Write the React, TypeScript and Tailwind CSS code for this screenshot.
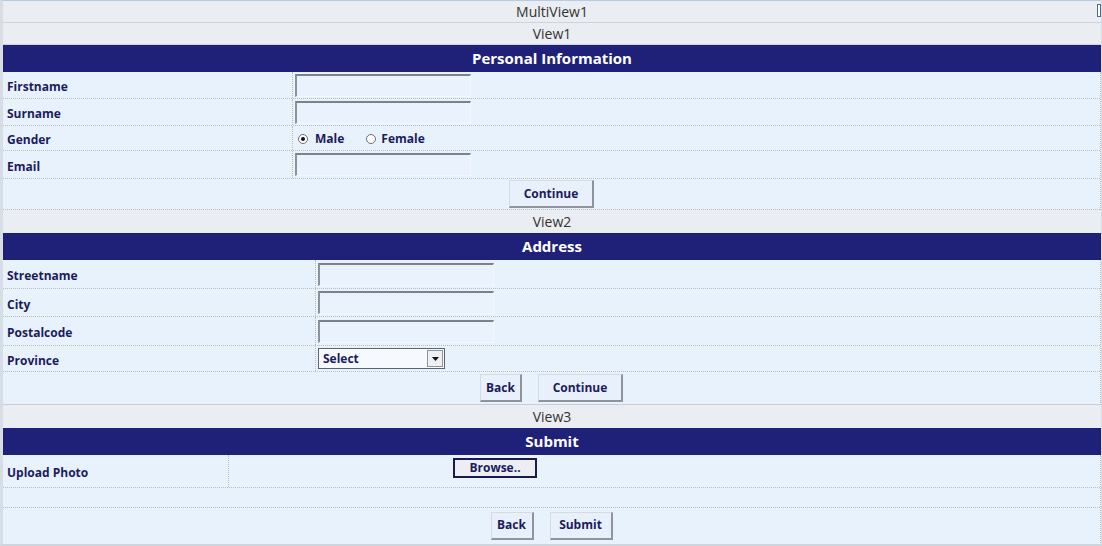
import React from "react";

const font = { fontFamily: '"Segoe UI", "Open Sans", "Noto Sans", sans-serif' };

function Bar({ text }: { text: string }) {
  return (
    <div className="h-[22px] bg-[#eaedf1] border-b border-[#cfd3d8] flex items-center justify-center text-[14px] text-[#333] leading-none">
      {text}
    </div>
  );
}

function Header({ text }: { text: string }) {
  return (
    <div className="h-[27px] bg-[#1f2077] flex items-center justify-center text-white font-bold text-[15px] leading-none">
      {text}
    </div>
  );
}

function TextBox() {
  return (
    <div className="w-[176px] h-[23px] bg-[#e9f2fd] border-t-2 border-l-2 border-t-[#7d8289] border-l-[#8d9299] border-r border-b border-r-[#f4f7fb] border-b-[#f4f7fb]" />
  );
}

function Btn({ label, w }: { label: string; w: string }) {
  return (
    <div
      className={`${w} h-[28px] bg-[#e8f0fb] border border-[#d6dbe2] border-r-2 border-b-2 border-r-[#8f949a] border-b-[#8f949a] flex items-center justify-center font-bold text-[12px] text-[#1b1c5c]`}
    >
      {label}
    </div>
  );
}

function Row({
  label,
  h,
  col,
  children,
}: {
  label: string;
  h: string;
  col: string;
  children?: React.ReactNode;
}) {
  return (
    <div className={`${h} flex border-b border-dotted border-[#b9bdc4]`}>
      <div className={`${col} flex items-center pl-[4px] pt-[4px] border-r border-dotted border-[#b9bdc4] font-bold text-[12px] text-[#1b1c5c]`}>
        {label}
      </div>
      <div className="flex-1 flex items-center pl-[2px]">{children}</div>
    </div>
  );
}

function Radio({ checked }: { checked?: boolean }) {
  return (
    <span className="w-[10px] h-[10px] rounded-full border border-[#6b6f75] bg-white flex items-center justify-center">
      {checked && <span className="w-[4px] h-[4px] rounded-full bg-[#111]" />}
    </span>
  );
}

export default function App() {
  return (
    <div style={font} className="w-[1102px] h-[546px] bg-white overflow-hidden">
      <div className="h-[546px] border-t border-[#b6cce2] border-l-[3px] border-l-[#d7dde5] border-r border-r-[#d7dde5] border-b-2 border-b-[#cfd5dc] bg-[#e8f2fd] relative">
        <div className="absolute right-[0px] top-[3px] w-[4px] h-[13px] border border-[#4d6a92] bg-white" />
        <Bar text="MultiView1" />

        {/* View1 */}
        <Bar text="View1" />
        <Header text="Personal Information" />
        <div className="border-r border-dotted border-[#b9bdc4]">
          <Row label="Firstname" h="h-[27px]" col="w-[290px]">
            <TextBox />
          </Row>
          <Row label="Surname" h="h-[27px]" col="w-[290px]">
            <TextBox />
          </Row>
          <Row label="Gender" h="h-[25px]" col="w-[290px]">
            <div className="flex items-center font-bold text-[12px] text-[#1b1c5c] pl-[3px] pt-[1px]">
              <Radio checked />
              <span className="ml-[7px]">Male</span>
              <span className="ml-[22px]">
                <Radio />
              </span>
              <span className="ml-[5px]">Female</span>
            </div>
          </Row>
          <Row label="Email" h="h-[28px]" col="w-[290px]">
            <TextBox />
          </Row>
          <div className="h-[31px] flex items-center justify-center border-b border-dotted border-[#b9bdc4]">
            <Btn label="Continue" w="w-[85px]" />
          </div>
        </div>

        {/* View2 */}
        <div className="h-[23px] bg-[#eaedf1] flex items-center justify-center text-[14px] text-[#333] leading-none">
          View2
        </div>
        <Header text="Address" />
        <div className="border-r border-dotted border-[#b9bdc4]">
          <Row label="Streetname" h="h-[29px]" col="w-[313px]">
            <TextBox />
          </Row>
          <Row label="City" h="h-[28px]" col="w-[313px]">
            <TextBox />
          </Row>
          <Row label="Postalcode" h="h-[29px]" col="w-[313px]">
            <TextBox />
          </Row>
          <Row label="Province" h="h-[26px]" col="w-[313px]">
            <div className="w-[127px] h-[21px] bg-[#f6f9fe] border border-[#5f646b] flex items-center justify-between">
              <span className="pl-[4px] font-bold text-[12px] text-[#1b1c5c]">Select</span>
              <span className="w-[16px] h-[17px] mr-[1px] bg-[#eef0f3] border border-[#8f949a] flex items-center justify-center">
                <svg width="7" height="4" viewBox="0 0 7 4">
                  <path d="M0 0h7L3.5 4z" fill="#111" />
                </svg>
              </span>
            </div>
          </Row>
          <div className="h-[33px] flex items-center justify-center gap-[16px] border-b border-[#c9ced5]">
            <Btn label="Back" w="w-[42px]" />
            <Btn label="Continue" w="w-[85px]" />
          </div>
        </div>

        {/* View3 */}
        <div className="h-[23px] bg-[#eaedf1] flex items-center justify-center text-[14px] text-[#333] leading-none">
          View3
        </div>
        <Header text="Submit" />
        <div className="border-r border-dotted border-[#b9bdc4]">
          <div className="h-[33px] flex border-b border-dotted border-[#b9bdc4]">
            <div className="w-[226px] flex items-center pl-[4px] pt-[3px] border-r border-dotted border-[#b9bdc4] font-bold text-[12px] text-[#1b1c5c]">
              Upload Photo
            </div>
            <div className="flex-1 pl-[224px] pt-[3px]">
              <div className="w-[84px] h-[20px] bg-[#eceef3] border-2 border-[#1a1b4a] flex items-center justify-center font-bold text-[12px] text-[#1b1c5c]">
                Browse..
              </div>
            </div>
          </div>
          <div className="h-[20px] border-b border-dotted border-[#b9bdc4]" />
          <div className="h-[35px] flex items-center justify-center gap-[16px]">
            <Btn label="Back" w="w-[43px]" />
            <Btn label="Submit" w="w-[63px]" />
          </div>
        </div>
      </div>
    </div>
  );
}
